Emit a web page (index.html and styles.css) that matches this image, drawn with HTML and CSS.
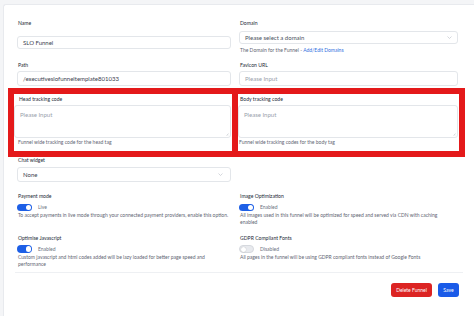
FILE: index.html
```html
<!DOCTYPE html>
<html>
<head>
<meta charset="utf-8">
<link rel="stylesheet" href="styles.css">
</head>
<body>
<div class="card">
  <div class="row r1">
    <div class="field">
      <div class="label">Name</div>
      <div class="input name-input"><span class="val">SLO Funnel</span></div>
    </div>
    <div class="field">
      <div class="label">Domain</div>
      <div class="input select domain-select"><span class="ph dark">Please select a domain</span>
        <svg class="chev" viewBox="0 0 10 6" width="5" height="3"><path d="M1 1l4 4 4-4" fill="none" stroke="#b8bdc6" stroke-width="1.2"/></svg>
      </div>
      <div class="help">The Domain for the Funnel - <span class="link">Add/Edit Domains</span></div>
    </div>
  </div>

  <div class="row r2">
    <div class="field">
      <div class="label">Path</div>
      <div class="input path-input"><span class="val">/executiveslofunneltemplate801033</span></div>
    </div>
    <div class="field">
      <div class="label">Favicon URL</div>
      <div class="input path-input"><span class="ph">Please Input</span></div>
    </div>
  </div>

  <div class="tracking">
    <div class="tbox tleft">
      <div class="label tlabel">Head tracking code</div>
      <div class="textarea"><span class="ph">Please Input</span>
        <svg class="grip" viewBox="0 0 6 6" width="3" height="3"><path d="M5 1L1 5M5 3.5L3.5 5" stroke="#9ca3af" stroke-width="0.8"/></svg>
      </div>
      <div class="help thelp">Funnel wide tracking code for the head tag</div>
    </div>
    <div class="tbox tright">
      <div class="label tlabel">Body tracking code</div>
      <div class="textarea"><span class="ph">Please Input</span>
        <svg class="grip" viewBox="0 0 6 6" width="3" height="3"><path d="M5 1L1 5M5 3.5L3.5 5" stroke="#9ca3af" stroke-width="0.8"/></svg>
      </div>
      <div class="help thelp">Funnel wide tracking codes for the body tag</div>
    </div>
  </div>

  <div class="row r4">
    <div class="field">
      <div class="label">Chat widget</div>
      <div class="input select chat-select"><span class="val">None</span>
        <svg class="chev" viewBox="0 0 10 6" width="5" height="3"><path d="M1 1l4 4 4-4" fill="none" stroke="#b8bdc6" stroke-width="1.2"/></svg>
      </div>
    </div>
    <div class="field"></div>
  </div>

  <div class="row r5">
    <div class="field">
      <div class="label">Payment mode</div>
      <div class="switch-row"><span class="switch on"><span class="knob"></span></span><span class="switch-text">Live</span></div>
      <div class="help">To accept payments in live mode through your connected payment providers, enable this option.</div>
    </div>
    <div class="field">
      <div class="label">Image Optimization</div>
      <div class="switch-row"><span class="switch on"><span class="knob"></span></span><span class="switch-text">Enabled</span></div>
      <div class="help narrow">All images used in this funnel will be optimized for speed and served via CDN with caching enabled</div>
    </div>
  </div>

  <div class="row r6">
    <div class="field">
      <div class="label">Optimise Javascript</div>
      <div class="switch-row"><span class="switch on"><span class="knob"></span></span><span class="switch-text">Enabled</span></div>
      <div class="help">Custom javascript and html codes added will be lazy loaded for better page speed and performance</div>
    </div>
    <div class="field">
      <div class="label">GDPR Compliant Fonts</div>
      <div class="switch-row"><span class="switch off"><span class="knob"></span></span><span class="switch-text">Disabled</span></div>
      <div class="help">All pages in the funnel will be using GDPR compliant fonts instead of Google Fonts</div>
    </div>
  </div>

  <div class="footer">
    <button class="btn btn-danger">Delete Funnel</button>
    <button class="btn btn-primary">Save</button>
  </div>
</div>
</body>
</html>
```

FILE: styles.css
```css
html, body {
  margin: 0;
  padding: 0;
}
body {
  background: #f4f5f7;
  font-family: Lato, "Open Sans", "Liberation Sans", sans-serif;
  color: #374151;
  overflow: hidden;
  width: 474px;
  height: 316px;
}
.card {
  margin: 4px 0 0 3px;
  background: #ffffff;
  border: 1px solid #e8eaee;
  border-right: none;
  border-bottom: none;
  border-radius: 3px 0 0 0;
  padding: 15px 16px 0 13px;
  box-sizing: border-box;
  width: 471px;
  height: 312px;
}
.row {
  display: grid;
  grid-template-columns: 214px 219px;
  column-gap: 8px;
}
.field {
  display: flex;
  flex-direction: column;
}
.label {
  font-size: 5.1px;
  line-height: 7px;
  color: #232a36;
  padding-left: 1px;
}
.help {
  font-size: 5px;
  line-height: 7.4px;
  color: #5f6673;
  padding-left: 1px;
}
.help.narrow {
  max-width: 205px;
}
.link {
  color: #2f6fe0;
}
.input {
  border: 1px solid #e3e6ea;
  border-radius: 3px;
  box-sizing: border-box;
  display: flex;
  align-items: center;
  padding: 0 5px;
  font-size: 6px;
  background: #fff;
  position: relative;
}
.val {
  color: #3b4250;
}
.ph {
  color: #9aa1ac;
}
.ph.dark {
  color: #4b5260;
}
.name-input {
  margin-top: 9px;
  height: 13px;
}
.domain-select {
  margin-top: 4px;
  height: 13px;
}
.r1 .help {
  margin-top: 3px;
}
.select {
  justify-content: space-between;
}
.chev {
  display: block;
}
.r2 {
  margin-top: 8px;
}
.path-input {
  margin-top: 2px;
  height: 15px;
}
.tracking {
  display: flex;
  margin: 2px -7px 0 -9px;
}
.tbox {
  border: 6px solid #e4191a;
  box-sizing: border-box;
  padding: 2px 0 4px 0;
  background: #fff;
}
.tleft {
  width: 230px;
}
.tright {
  width: 233px;
  margin-left: -6px;
}
.tlabel {
  padding-left: 5px;
}
.tright .tlabel {
  padding-left: 2px;
}
.textarea {
  margin-top: 2px;
  height: 33px;
  border: 1px solid #e3e6ea;
  border-radius: 3px;
  box-sizing: border-box;
  padding: 5px 5px;
  font-size: 6px;
  position: relative;
  margin-right: 1px;
}
.grip {
  position: absolute;
  right: 1px;
  bottom: 1px;
}
.thelp {
  margin-top: 1px;
  padding-left: 1px;
}
.tleft .thelp {
  padding-left: 4px;
}
.chat-select {
  margin-top: 3px;
  height: 15.5px;
}
.chat-select .chev {
  margin-right: 2px;
}
.r5 {
  margin-top: 10.5px;
}
.r6 {
  margin-top: 8px;
}
.switch-row {
  display: flex;
  align-items: center;
  margin-top: 3.5px;
  height: 8px;
}
.switch {
  width: 15px;
  height: 7.5px;
  border-radius: 4px;
  box-sizing: border-box;
  position: relative;
  display: inline-block;
}
.switch.on {
  background: #1d5fe6;
}
.switch.off {
  background: #e8eaee;
  border: 0.5px solid #d6d9de;
}
.knob {
  position: absolute;
  top: 1px;
  width: 5.5px;
  height: 5.5px;
  border-radius: 50%;
  background: #fff;
}
.switch.on .knob {
  right: 1px;
}
.switch.off .knob {
  left: 0.5px;
  top: 0.5px;
  box-shadow: 0 0 1px rgba(0,0,0,0.3);
}
.switch-text {
  font-size: 5px;
  color: #6b7280;
  margin-left: 6px;
}
.r5 .help, .r6 .help {
  margin-top: 0.5px;
}
.footer {
  margin: 4px -5px 0 -2px;
  border-top: 1px solid #eef0f3;
  padding-top: 10px;
  display: flex;
  justify-content: flex-end;
  gap: 6px;
}
.btn {
  border: none;
  border-radius: 3px;
  height: 14px;
  color: #fff;
  font-family: Lato, "Liberation Sans", sans-serif;
  font-size: 5px;
  padding: 0;
  margin: 0;
}
.btn-danger {
  background: #dc2423;
  width: 41px;
}
.btn-primary {
  background: #1a5be8;
  width: 21px;
  margin-right: 4px;
}
```
